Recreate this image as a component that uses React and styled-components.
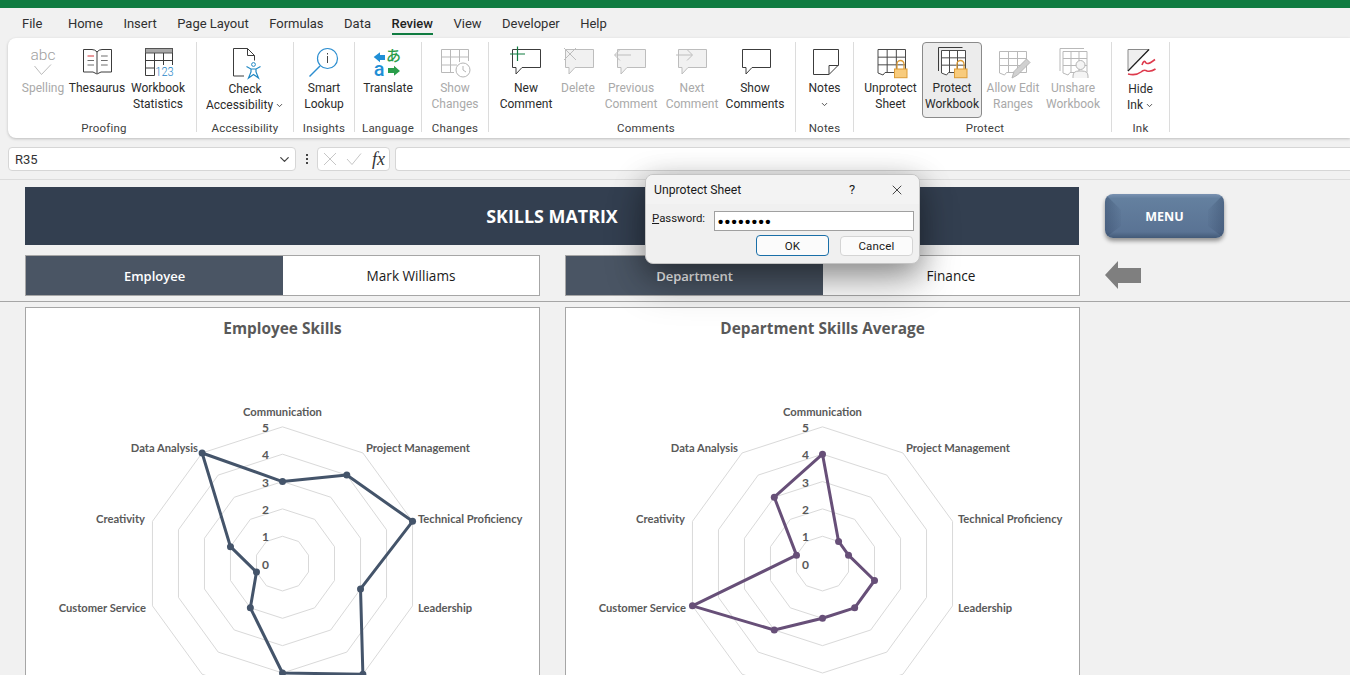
import React from "react";
import styled, { createGlobalStyle, css } from "styled-components";
import { ChevronDown, X } from "lucide-react";

const Global = createGlobalStyle`
  html, body { margin: 0; padding: 0; height: 675px; overflow: hidden; background: #f1f1f1; }
  #root { height: 675px; }
  * { box-sizing: border-box; }
`;

const Page = styled.div`
  position: relative; width: 1350px; height: 675px; overflow: hidden;
  display: flex; flex-direction: column; background: #f1f1f1;
  font-family: Roboto, "Noto Sans", sans-serif; color: #262626;
`;
const TopStrip = styled.div`height: 8px; background: #107c41; flex: none;`;
const TabBar = styled.nav`
  height: 30px; flex: none; display: flex; align-items: stretch; gap: 20.5px; padding-left: 22px;
`;
const Tab = styled.div`
  position: relative; font-size: 13px; line-height: 31px; color: #303030;
  ${p => p.$first && css`margin-right: 5px;`}
  ${p => p.$active && css`
    font-weight: 500; color: #1f1f1f;
    &::after { content: ""; position: absolute; left: 0; right: 0; bottom: 3px; height: 2px; background: #107c41; }
  `}
`;
const Ribbon = styled.section`
  height: 100px; flex: none; margin-left: 8px; padding: 4px 0 6px; display: flex;
  background: #fff; border-radius: 8px 0 0 8px; box-shadow: 0 1px 3px rgba(0,0,0,.22);
`;
const Group = styled.div`
  width: ${p => p.$w}px; flex: none; display: flex; flex-direction: column; height: 90px;
  padding-left: ${p => p.$pl || 0}px; padding-right: ${p => p.$pr || 0}px;
  border-right: 1px solid #dcdcdc;
`;
const Buttons = styled.div`display: flex; height: 76px; flex: none;`;
const GroupLabel = styled.div`
  margin-top: 3px; height: 14px; line-height: 14px; font-size: 11.5px; letter-spacing: .2px; text-align: center; color: #404040; white-space: nowrap;
`;
const RibbonButton = styled.div`
  width: ${p => p.$w}px; flex: none; height: 76px; padding-top: 2px; display: flex; flex-direction: column; align-items: center;
  font-size: 12px; line-height: 16px; text-align: center; white-space: nowrap;
  color: ${p => p.$off ? "#a9a9a9" : "#2b2b2b"};
  border: 1px solid transparent; border-radius: 4px;
  ${p => p.$pressed && css`background: #ececec; border-color: #8a8a8a; `}
`;
const IconSlot = styled.div`
  height: 34px; width: 36px; margin-bottom: 1px; flex: none;
  & > svg { overflow: visible; display: block; }
`;
const Lines = styled.div`${p => p.$low && css`margin-top: 1px;`}`;
const Caret = styled(ChevronDown)`width: 9px; height: 9px; stroke-width: 2.4; vertical-align: -1px; margin-left: 2px; color: #444;`;

const I = ({ children }) => (
  <IconSlot>
    <svg width="36" height="34" viewBox="0 0 36 34" fill="none" strokeWidth="1">{children}</svg>
  </IconSlot>
);
const GRID_OFF = "#b9b9b9";
const Grid = ({ x, y, w, h, c = "#4a4a4a" }) => (
  <g stroke={c}>
    <path d={`M${x} ${y}h${w}v${h}h-${w-7}l-2 2.5 -5 -2z`} fill="#fff" />
    <path d={`M${x} ${y+h/3}h${w}M${x} ${y+2*h/3}h${w}M${x+w/3} ${y}v${h}M${x+2*w/3} ${y}v${h}`} />
  </g>
);
const Lock = ({ x, y }) => (
  <g>
    <path d={`M${x+3} ${y+9}v-5a3.5 3.5 0 0 1 7 0v5`} stroke="#dd9c36" strokeWidth="1.3" />
    <rect x={x+.5} y={y+9} width="12.5" height="8.7" fill="#f8cb7c" stroke="#dd9c36" />
  </g>
);
const Bubble = ({ x, r, fill = "#fff", c = "#3c3c3c" }) => (
  <path d={`M${x}.5 4.5H${r}.5V22.5H${x+10}L${x+4} 29V22.5H${x}.5Z`} stroke={c} fill={fill} />
);

const icons = {
  spelling: <I>
    <text x="18" y="15" textAnchor="middle" fontFamily="Roboto, sans-serif" fontWeight="300" fontSize="15.5" fill="#a0a0a0">abc</text>
    <path d="M9.5 21L16.5 29.5L26 19.5" stroke="#bcbcbc" />
  </I>,
  thesaurus: <I>
    <path d="M18 7Q16 4.5 13 4.5H4.5V27H14L18 29L22 27H32.5V4.5H23Q20 4.5 18 7V28" stroke="#3c3c3c" />
    <path d="M8.5 11H15" stroke="#d13438" />
    <path d="M8.5 15.5H15M8.5 20H15M22 11H28.7M22 15.5H28.7M22 20H28.7" stroke="#6e6e6e" />
  </I>,
  stats: <I>
    <rect x="5.5" y="3.5" width="27" height="4.5" fill="#a8a8a8" stroke="#555" />
    <path d="M5.5 8V30.5H14.5V23M5.5 15.5H32.5M5.5 23H15M14.5 8V23M23.5 8V20M32.5 8V20" stroke="#3c3c3c" />
    <text x="15.3" y="31" fontFamily="Roboto, sans-serif" fontWeight="300" fontSize="13.5" fill="#1f86c8" textLength="18.3" lengthAdjust="spacingAndGlyphs">123</text>
  </I>,
  access: <I>
    <path d="M17 31H6.5V3.5H20.5L27.5 10.5V15.5M20.5 3.5V10.5H27.5" stroke="#3c3c3c" />
    <circle cx="26.5" cy="19.5" r="1.9" stroke="#1f88c4" />
    <path d="M19.5 21.5L24 24V27L21.5 33L26.5 29.5L31.5 33L29 27V24L33.5 21.5M24 24H29" stroke="#1f88c4" strokeWidth="1.2" />
  </I>,
  lookup: <I>
    <circle cx="21.5" cy="13.5" r="10" stroke="#2c8ed0" strokeWidth="1.2" />
    <path d="M14 21L3.5 31.5" stroke="#2c8ed0" strokeWidth="1.4" />
    <path d="M21.5 11V18M21.5 8V9.5" stroke="#444" />
  </I>,
  translate: <I>
    <polygon points="3.7,12 10,7.3 10,10 15,10 15,15 10,15 10,17.3" fill="#1f8fd6" />
    <text x="3.7" y="31.3" fontFamily="Roboto, sans-serif" fontWeight="500" fontSize="20" fill="#1f8fd6">a</text>
    <text x="23.5" y="16" textAnchor="middle" fontFamily={'"Noto Sans CJK JP", sans-serif'} fontWeight="500" fontSize="15" fill="#2a9d4a">あ</text>
    <polygon points="30,26 24,20.7 24,23 18,23 18,28 24,28 24,30.7" fill="#2a9d4a" />
  </I>,
  changes: <I>
    <path d="M4.5 4.5H31.5V16M4.5 4.5V27.5H17M4.5 12H31.5M4.5 20H20M13.5 4.5V27M22.5 4.5V17" stroke={GRID_OFF} />
    <circle cx="26" cy="25" r="7" stroke="#b5b5b5" fill="#fff" />
    <path d="M26 21V25L29 27" stroke="#b5b5b5" />
  </I>,
  newComment: <I>
    <Bubble x={4} r={32} />
    <path d="M9.5 1.5V16M2 9H17" stroke="#107c41" strokeWidth="1.2" />
  </I>,
  del: <I>
    <Bubble x={5} r={33} fill="#f1f1f1" c="#bdbdbd" />
    <path d="M4 3L16 15M16 3L4 15" stroke="#bdbdbd" />
  </I>,
  prev: <I>
    <Bubble x={4} r={32} fill="#f1f1f1" c="#bdbdbd" />
    <path d="M2 10H18M7 4.5L1.5 10L7 15.5" stroke="#bdbdbd" />
  </I>,
  next: <I>
    <Bubble x={4} r={32} fill="#f1f1f1" c="#bdbdbd" />
    <path d="M2 10H18M13 4.5L18.5 10L13 15.5" stroke="#bdbdbd" />
  </I>,
  show: <I><Bubble x={5} r={33} /></I>,
  notes: <I>
    <path d="M6.5 4.5H31.5V20L22 29.5H6.5Z" stroke="#3c3c3c" />
    <path d="M22 29.5V20.5H31.5" stroke="#3c3c3c" />
  </I>,
  unprotect: <I><Grid x={5} y={4.5} w={27.5} h={23} /><Lock x={21} y={15} /></I>,
  protectWb: <I>
    <path d="M4.5 26V2.5H28.5" stroke="#3c3c3c" />
    <Grid x={7.5} y={5.5} w={24} h={22} /><Lock x={20} y={15} />
  </I>,
  allow: <I>
    <Grid x={4.5} y={6.5} w={27} h={21} c={GRID_OFF} />
    <path d="M17 33L19 26.5L31.5 14L35 17.5L22.5 30Z" fill="#d0d0d0" stroke="#b5b5b5" />
  </I>,
  unshare: <I>
    <path d="M5 26V3.5H29" stroke={GRID_OFF} />
    <Grid x={8} y={6.5} w={24} h={21} c={GRID_OFF} />
    <circle cx="25.5" cy="20" r="4.5" fill="#f4f4f4" stroke="#b5b5b5" />
    <path d="M18 33V31Q18 26 24 26H27Q33 26 33 31V33" fill="#f4f4f4" stroke="#b5b5b5" />
  </I>,
  ink: <I>
    <path d="M5 26V4.5H26Z" fill="#efefef" stroke="#8a8a8a" />
    <path d="M5 26L26 4.5" stroke="#222" strokeWidth="1.2" />
    <path d="M19 20Q21 14 23 18Q25 20 32 14.5M5 29Q13 31 18 27Q21 24 24 26Q28 27 32.5 24" stroke="#de3a4c" strokeWidth="1.6" />
  </I>,
};

const ribbon = [
  { label: "Proofing", w: 189, pl: 8, pr: 4, items: [
    { i: "spelling", w: 54, t: ["Spelling"], off: true },
    { i: "thesaurus", w: 54, t: ["Thesaurus"] },
    { i: "stats", w: 68, t: ["Workbook", "Statistics"] } ] },
  { label: "Accessibility", w: 97, items: [{ i: "access", w: 96, t: ["Check", "Accessibility"], caret: 2, low: true }] },
  { label: "Insights", w: 61, items: [{ i: "lookup", w: 60, t: ["Smart", "Lookup"] }] },
  { label: "Language", w: 67, items: [{ i: "translate", w: 66, t: ["Translate"] }] },
  { label: "Changes", w: 67, items: [{ i: "changes", w: 66, t: ["Show", "Changes"], off: true }] },
  { label: "Comments", w: 307, pl: 8, items: [
    { i: "newComment", w: 58, t: ["New", "Comment"] },
    { i: "del", w: 46, t: ["Delete"], off: true },
    { i: "prev", w: 60, t: ["Previous", "Comment"], off: true },
    { i: "next", w: 62, t: ["Next", "Comment"], off: true },
    { i: "show", w: 64, t: ["Show", "Comments"] } ] },
  { label: "Notes", w: 58, items: [{ i: "notes", w: 57, t: ["Notes"], caret: 3 }] },
  { label: "Protect", w: 258, pl: 5, items: [
    { i: "unprotect", w: 63, t: ["Unprotect", "Sheet"] },
    { i: "protectWb", w: 60, t: ["Protect", "Workbook"], pressed: true },
    { i: "allow", w: 62, t: ["Allow Edit", "Ranges"], off: true },
    { i: "unshare", w: 58, t: ["Unshare", "Workbook"], off: true } ] },
  { label: "Ink", w: 58, items: [{ i: "ink", w: 57, t: ["Hide", "Ink"], caret: 2, low: true }] },
];

const FormulaBar = styled.div`
  height: 42px; flex: none; display: flex; align-items: flex-start; padding: 9px 0 0 8px;
  border-bottom: 1px solid #dcdcdc;
`;
const Field = styled.div`
  height: 24px; background: #fff; border: 1px solid #d6d6d6; border-radius: 4px; display: flex; align-items: center;
  width: ${p => p.$w}px; flex: none;
`;
const NameBox = styled(Field)`
  padding: 0 3px 0 6px; justify-content: space-between; font-size: 13px; color: #333;
`;
const Dots = styled.div`
  width: 21px; flex: none; height: 24px; display: flex; flex-direction: column; align-items: center; justify-content: center; gap: 2px;
  & > i { width: 2px; height: 2px; background: #444; display: block; }
`;
const FuncBox = styled(Field)`padding-left: 5px; gap: 9px; margin-right: 5px;`;
const Fx = styled.span`
  font-family: "Liberation Serif", serif; font-style: italic; font-size: 18px; color: #333; margin-left: 1px;
`;
const FormulaInput = styled(Field)`border-radius: 4px 0 0 4px; border-right: none;`;

const Sheet = styled.main`flex: 1; min-height: 0; overflow: hidden; padding-top: 7px;`;
const TopArea = styled.div`display: flex; padding-left: 25px;`;
const HeaderColumn = styled.div`width: 1055px; flex: none; display: flex; flex-direction: column;`;
const Banner = styled.h1`
  margin: 0 1px 0 0; height: 58px; background: #333f50; color: #fff; display: flex; align-items: center; justify-content: center;
  font: 700 17.9px "Open Sans", sans-serif;
`;
const Selectors = styled.div`display: flex; gap: 25px; margin-top: 10px;`;
const Selector = styled.div`
  width: 515px; height: 41px; display: grid; grid-template-columns: 257px 1fr; border: 1px solid #a6a6a6; background: #fff;
  color: #1a1a1a;
`;
const SelectorLabel = styled.div`
  background: #4a5564; color: #fff; font: 600 13px "Open Sans", sans-serif; display: flex; align-items: center; justify-content: center;
`;
const SelectorValue = styled.div`display: flex; align-items: center; justify-content: center; font: 400 13.6px "Open Sans", sans-serif;`;
const SideColumn = styled.div`margin-left: 25px; padding-top: 7px; display: flex; flex-direction: column; align-items: flex-start; gap: 23px;`;
const MenuButton = styled.div`
  position: relative; overflow: hidden;
  width: 119px; height: 44px; border-radius: 8px; color: #fff; display: flex; align-items: center; justify-content: center;
  font: 700 12.5px "Open Sans", sans-serif;
  background: linear-gradient(#7a92b2 0, #64809f 10%, #5a7394 86%, #435a78 100%);
  box-shadow: 0 3px 4px rgba(0,0,0,.4);
  &::before, &::after { content: ""; position: absolute; top: 0; bottom: 0; width: 16px; }
  &::before { left: 0; background: linear-gradient(90deg, rgba(36,54,84,.32), rgba(36,54,84,.04)); clip-path: polygon(0 0, 100% 16px, 100% 32px, 0 100%); }
  &::after { right: 0; background: linear-gradient(270deg, rgba(36,54,84,.32), rgba(36,54,84,.04)); clip-path: polygon(100% 0, 0 16px, 0 32px, 100% 100%); }
`;
const Rule = styled.div`height: 1px; background: #a6a6a6; margin-top: 5px;`;
const Charts = styled.div`display: flex; gap: 25px; padding-left: 25px; margin-top: 5px;`;
const ChartCard = styled.figure`
  margin: 0; width: 515px; height: 400px; flex: none; background: #fff; border: 1px solid #a6a6a6; text-align: center;
`;
const ChartTitle = styled.figcaption`
  height: 32px; padding-top: 9px; font: 700 15.4px/24px "Open Sans", sans-serif; color: #595959;
`;
const ChartSvg = styled.svg`
  display: block;
  text { font-family: Lato, "Open Sans", sans-serif; font-weight: 700; fill: #595959; font-size: 11.2px; }
`;

const AXES = [
  ["Communication", 0, -151.5, "middle"],
  ["Project Management", 83.5, -115.5, "start"],
  ["Technical Proficiency", 135.5, -44.5, "start"],
  ["Leadership", 135.5, 44.5, "start"],
  ["Problem Solving", 135.5, 118, "start"],
  ["", 0, 0, "middle"],
  ["Adaptability", -84.5, 118, "end"],
  ["Customer Service", -136.5, 44.5, "end"],
  ["Creativity", -137.5, -44.5, "end"],
  ["Data Analysis", -84.5, -115.5, "end"],
];
const CX = 256.5, CY = 223.6, STEP = 27.35;
const pt = (i, v) => {
  const a = (i * 36 * Math.PI) / 180;
  return [CX + v * STEP * Math.sin(a), CY - v * STEP * Math.cos(a)];
};
const Radar = ({ values, color }) => {
  const pts = values.map((v, i) => pt(i, v));
  return (
    <ChartSvg width="513" height="368" viewBox="0 0 513 368">
      {[1, 2, 3, 4, 5].map(r => (
        <polygon key={r} points={AXES.map((_, i) => pt(i, r).join(",")).join(" ")} fill="none" stroke="#d9d9d9" strokeWidth="1" />
      ))}
      {[0, 1, 2, 3, 4, 5].map(n => (
        <text key={n} x={CX - 20.5} y={CY + 5 - n * STEP} style={{ fontSize: 12 }}>{n}</text>
      ))}
      {AXES.map(([t, dx, dy, anchor]) => t && (
        <text key={t} x={CX + dx} y={CY + dy + 4} textAnchor={anchor}>{t}</text>
      ))}
      <polygon points={pts.map(p => p.join(",")).join(" ")} fill="none" stroke={color} strokeWidth="3" strokeLinejoin="round" />
      {pts.map((p, i) => <circle key={i} cx={p[0]} cy={p[1]} r="3.5" fill={color} />)}
    </ChartSvg>
  );
};

const Dialog = styled.div`
  position: absolute; left: 645px; top: 174px; width: 275px; height: 90px; background: #f0f0f0; border-radius: 8px;
  border: 1px solid #c4c4c4; box-shadow: 0 8px 30px rgba(0,0,0,.36), 0 20px 44px rgba(0,0,0,.2); font-size: 12px; color: #1a1a1a; overflow: hidden;
`;
const DialogTitle = styled.div`
  height: 29px; background: #f3f3f3; display: flex; align-items: center; padding-left: 8px; font-size: 12.2px;
`;
const TitleSpacer = styled.div`flex: 1;`;
const Help = styled.span`width: 40px; font-size: 13px; text-align: left;`;
const CloseBox = styled.span`width: 30px; display: flex; align-items: center;`;
const DialogRow = styled.div`display: flex; align-items: flex-start; padding-left: 6px; margin-top: 7px;`;
const PwLabel = styled.span`width: 62px; font-size: 11.4px; line-height: 14px; flex: none;`;
const PwInput = styled.div`
  width: 200px; height: 20px; background: #fff; border: 1px solid #a0a0a0; padding-left: 3px;
  font: 700 15px/20px "Liberation Sans", sans-serif; letter-spacing: 1.5px; color: #000;
`;
const DialogActions = styled.div`display: flex; gap: 11px; padding-left: 110px; margin-top: 4px; align-items: center;`;
const DialogBtn = styled.div`
  width: 73px; height: ${p => p.$primary ? 21 : 20}px; border-radius: 4px; background: #fbfbfb; display: flex; align-items: center; justify-content: center;
  border: 1px solid ${p => p.$primary ? "#1a6fa8" : "#d4d4d4"}; font-size: 11.5px; letter-spacing: .2px;
`;
const Under = styled.span`text-decoration: underline;`;

export default function App() {
  return (
    <Page>
      <Global />
      <TopStrip />
      <TabBar>
        {["File", "Home", "Insert", "Page Layout", "Formulas", "Data", "Review", "View", "Developer", "Help"].map((t, i) => (
          <Tab key={t} $first={i === 0} $active={t === "Review"}>{t}</Tab>
        ))}
      </TabBar>
      <Ribbon>
        {ribbon.map(g => (
          <Group key={g.label} $w={g.w} $pl={g.pl} $pr={g.pr}>
            <Buttons>
              {g.items.map(b => (
                <RibbonButton key={b.i} $w={b.w} $off={b.off} $pressed={b.pressed}>
                  {icons[b.i]}
                  <Lines $low={b.low}>
                    {b.t.map((l, i) => (
                      <div key={l}>{l}{b.caret === 2 && i === 1 && <Caret />}</div>
                    ))}
                    {b.caret === 3 && <div><Caret style={{ marginLeft: 0 }} /></div>}
                  </Lines>
                </RibbonButton>
              ))}
            </Buttons>
            <GroupLabel>{g.label}</GroupLabel>
          </Group>
        ))}
      </Ribbon>
      <FormulaBar>
        <NameBox $w={288}>R35<ChevronDown size={15} color="#444" /></NameBox>
        <Dots><i /><i /><i /></Dots>
        <FuncBox $w={73}>
          <svg width="14" height="14" viewBox="0 0 14 14" fill="none" stroke="#c6c6c6"><path d="M1 1L13 13M13 1L1 13" /></svg>
          <svg width="16" height="14" viewBox="0 0 16 14" fill="none" stroke="#c6c6c6"><path d="M1 7L6 12.5L15 1.5" /></svg>
          <Fx>fx</Fx>
        </FuncBox>
        <FormulaInput $w={955} />
      </FormulaBar>
      <Sheet>
        <TopArea>
          <HeaderColumn>
            <Banner>SKILLS MATRIX</Banner>
            <Selectors>
              <Selector><SelectorLabel>Employee</SelectorLabel><SelectorValue>Mark Williams</SelectorValue></Selector>
              <Selector><SelectorLabel>Department</SelectorLabel><SelectorValue>Finance</SelectorValue></Selector>
            </Selectors>
          </HeaderColumn>
          <SideColumn>
            <MenuButton>MENU</MenuButton>
            <svg width="36" height="28" viewBox="0 0 36 28"><polygon points="0,14 13,0 13,7 36,7 36,22 13,22 13,28" fill="#7f7f7f" /></svg>
          </SideColumn>
        </TopArea>
        <Rule />
        <Charts>
          <ChartCard>
            <ChartTitle>Employee Skills</ChartTitle>
            <Radar values={[3, 4, 5, 3, 5, 4, 2, 1, 2, 5]} color="#44546a" />
          </ChartCard>
          <ChartCard>
            <ChartTitle>Department Skills Average</ChartTitle>
            <Radar values={[4, 1, 1, 2, 2, 2, 3, 5, 1, 3]} color="#674f78" />
          </ChartCard>
        </Charts>
      </Sheet>
      <Dialog>
        <DialogTitle>
          Unprotect Sheet
          <TitleSpacer />
          <Help>?</Help>
          <CloseBox><X size={16} strokeWidth={1.2} /></CloseBox>
        </DialogTitle>
        <DialogRow>
          <PwLabel><Under>P</Under>assword:</PwLabel>
          <PwInput>••••••••</PwInput>
        </DialogRow>
        <DialogActions>
          <DialogBtn $primary>OK</DialogBtn>
          <DialogBtn>Cancel</DialogBtn>
        </DialogActions>
      </Dialog>
    </Page>
  );
}
